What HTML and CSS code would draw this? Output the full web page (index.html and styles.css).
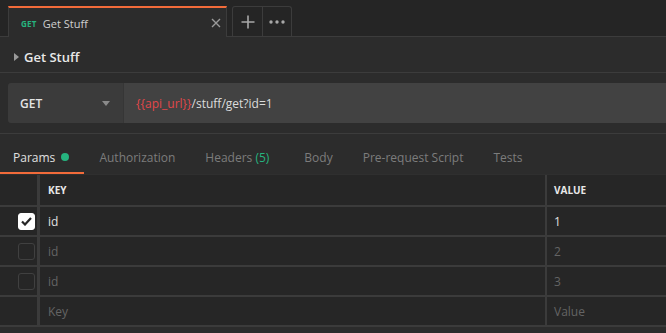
FILE: index.html
```html
<!doctype html>
<html lang="en">
<head>
	<meta charset="utf-8">
	<title>Get Stuff</title>
	<link rel="stylesheet" href="styles.css">
</head>
<body>
	<!--Вкладки запросов-->
	<div class="tabbar">
		<div class="tab">
			<span class="tab-method">GET</span>
			<span class="tab-name">Get Stuff</span>
			<svg class="tab-close" width="10" height="10" viewBox="0 0 10 10">
				<path d="M1 1L9 9M9 1L1 9" stroke="#9a9a9a" stroke-width="1.4"/>
			</svg>
		</div>
		<div class="tab-actions">
			<div class="tab-btn">
				<svg width="14" height="14" viewBox="0 0 14 14">
					<path d="M7 0.5V13.5M0.5 7H13.5" stroke="#a8a8a8" stroke-width="1.6"/>
				</svg>
			</div>
			<div class="tab-btn">
				<svg width="16" height="4" viewBox="0 0 16 4">
					<circle cx="2" cy="2" r="1.7" fill="#a8a8a8"/>
					<circle cx="8" cy="2" r="1.7" fill="#a8a8a8"/>
					<circle cx="14" cy="2" r="1.7" fill="#a8a8a8"/>
				</svg>
			</div>
		</div>
	</div>

	<!--Название запроса-->
	<div class="title-row">
		<svg class="caret" width="5" height="8" viewBox="0 0 5 8">
			<path d="M0 0L5 4L0 8Z" fill="#9a9a9a"/>
		</svg>
		<span class="title">Get Stuff</span>
	</div>

	<!--Строка адреса-->
	<div class="url-row">
		<div class="url-box">
			<div class="method">
				<span>GET</span>
				<svg width="8" height="5" viewBox="0 0 8 5">
					<path d="M0 0H8L4 5Z" fill="#8a8a8a"/>
				</svg>
			</div>
			<div class="url"><span class="var">{{api_url}}</span>/stuff/get?id=1</div>
		</div>
	</div>

	<!--Вкладки параметров-->
	<div class="subtabs">
		<div class="subtab active">Params <span class="dot"></span></div>
		<div class="subtab">Authorization</div>
		<div class="subtab headers">Headers <span class="count">(5)</span></div>
		<div class="subtab">Body</div>
		<div class="subtab">Pre-request Script</div>
		<div class="subtab">Tests</div>
	</div>

	<!--Таблица параметров-->
	<div class="params">
		<div class="row head">
			<div class="cell check"></div>
			<div class="cell key">KEY</div>
			<div class="cell value">VALUE</div>
		</div>
		<div class="row">
			<div class="cell check">
				<span class="box on">
					<svg width="11" height="9" viewBox="0 0 11 9">
						<path d="M1 4.5L4 7.5L10 1" stroke="#262626" stroke-width="2.2" fill="none"/>
					</svg>
				</span>
			</div>
			<div class="cell key">id</div>
			<div class="cell value">1</div>
		</div>
		<div class="row off">
			<div class="cell check"><span class="box"></span></div>
			<div class="cell key">id</div>
			<div class="cell value">2</div>
		</div>
		<div class="row off">
			<div class="cell check"><span class="box"></span></div>
			<div class="cell key">id</div>
			<div class="cell value">3</div>
		</div>
		<div class="row off">
			<div class="cell check"></div>
			<div class="cell key">Key</div>
			<div class="cell value">Value</div>
		</div>
	</div>
</body>
</html>
```

FILE: styles.css
```css
* {
	box-sizing: border-box;
}

body {
	margin: 0;
	background-color: #2c2c2c;
	font-family: "Open Sans", sans-serif;
	color: #e0e0e0;
	overflow: hidden;
}

/*вкладки запросов*/
.tabbar {
	height: 37px;
	background-color: #252525;
	border-bottom: 1px solid #3c3c3c;
	padding-left: 8px;
	display: flex;
	align-items: flex-end;
}

.tab {
	width: 219px;
	height: 31px;
	margin-bottom: -1px;
	background-color: #2c2c2c;
	border-top: 2px solid #f26b3a;
	border-left: 1px solid #3c3c3c;
	border-right: 1px solid #3c3c3c;
	display: flex;
	align-items: center;
	padding: 1px 5px 0 12px;
}

.tab-method {
	color: #26b47f;
	font-size: 8px;
	font-weight: 700;
	letter-spacing: 0.3px;
	margin-right: 6px;
}

.tab-name {
	font-size: 11px;
	color: #d0d0d0;
	flex: 1;
}

.tab-actions {
	display: flex;
	height: 30px;
	margin-left: 5px;
	border: 1px solid #3c3c3c;
	border-bottom: none;
	border-radius: 3px 3px 0 0;
}

.tab-btn {
	width: 29px;
	display: flex;
	align-items: center;
	justify-content: center;
}

.tab-btn + .tab-btn {
	border-left: 1px solid #3c3c3c;
}

/*название*/
.title-row {
	height: 36px;
	border-bottom: 1px solid #3c3c3c;
	display: flex;
	align-items: center;
	padding-left: 14px;
	padding-top: 4px;
}

.caret {
	margin-right: 5px;
}

.title {
	font-size: 13px;
	font-weight: 600;
	color: #e8e8e8;
}

/*строка адреса*/
.url-row {
	padding: 10px 0 10px 8px;
	border-bottom: 1px solid #3c3c3c;
}

.url-box {
	display: flex;
	height: 40px;
	border-radius: 3px 0 0 3px;
	overflow: hidden;
}

.method {
	width: 116px;
	background-color: #3b3b3b;
	border-right: 1px solid #363636;
	display: flex;
	align-items: center;
	justify-content: space-between;
	padding: 0 13px 0 12px;
	font-size: 12px;
	font-weight: 600;
	color: #e4e4e4;
}

.url {
	flex: 1;
	background-color: #424242;
	display: flex;
	align-items: center;
	padding-left: 12px;
	font-size: 12px;
	color: #dcdcdc;
}

.var {
	color: #e0474a;
}

/*вкладки параметров*/
.subtabs {
	display: flex;
	height: 40px;
}

.subtab {
	padding: 6px 15px 0;
	display: flex;
	align-items: center;
	font-size: 12px;
	color: #7c7c7c;
	white-space: pre;
}

.subtab:first-child {
	padding-left: 13px;
}

.subtab.headers {
	padding-right: 20px;
}

.subtab.active {
	color: #e0e0e0;
	border-bottom: 2px solid #f26b3a;
	padding-top: 8px;
}

.dot {
	display: inline-block;
	width: 8px;
	height: 8px;
	border-radius: 50%;
	background-color: #26b47f;
	margin-left: 3px;
}

.count {
	color: #26b47f;
}

/*таблица*/
.params {
	background-color: #262626;
	border-top: 1px solid #2f2f2f;
}

.row {
	display: flex;
	height: 30px;
	border-bottom: 2px solid #3b3b3b;
	font-size: 12px;
}

.row.head {
	height: 32px;
	font-size: 10px;
	font-weight: 700;
	color: #e8e8e8;
}

.cell {
	display: flex;
	align-items: center;
}

.check {
	width: 40px;
	border-right: 3px solid #3b3b3b;
	padding-left: 18px;
}

.key {
	width: 507px;
	border-right: 2px solid #3b3b3b;
	padding-left: 8px;
}

.value {
	flex: 1;
	padding-left: 7px;
}

.row.off .cell {
	color: #646464;
}

.box {
	width: 17px;
	height: 17px;
	border: 1px solid #404040;
	border-radius: 3px;
	display: flex;
	align-items: center;
	justify-content: center;
}

.box.on {
	background-color: #ffffff;
	border-color: #ffffff;
}
```
